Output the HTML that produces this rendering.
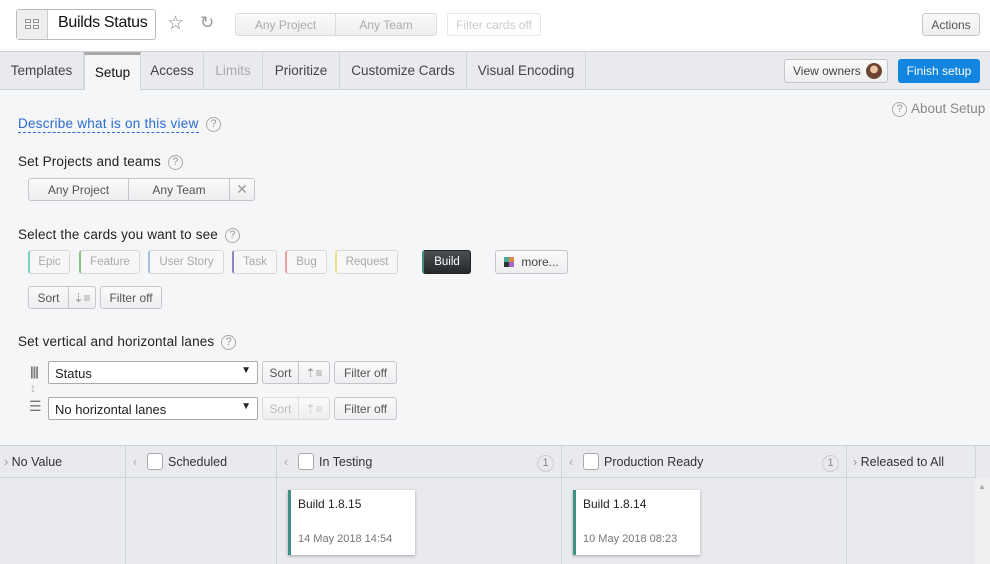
<!DOCTYPE html>
<html><head><meta charset="utf-8"><style>
*{box-sizing:border-box;margin:0;padding:0}
body{width:990px;height:564px;overflow:hidden;font-family:"Liberation Sans",sans-serif;background:#f5f6f8;position:relative;color:#222}
.a{position:absolute}
.btn{position:absolute;border:1px solid #c4c6ca;border-radius:3px;background:linear-gradient(#fafafa,#eceef0);font-size:12px;color:#555;display:flex;align-items:center;justify-content:center}
.q{display:inline-block;width:15px;height:15px;border:1px solid #aaa;border-radius:50%;font-size:11px;color:#999;text-align:center;line-height:13px;vertical-align:middle;margin-left:3px;letter-spacing:0}
.h{position:absolute;left:18px;font-size:13.5px;color:#222;letter-spacing:.15px}
.tab{position:absolute;top:52px;height:37px;font-size:13.5px;color:#444;display:flex;align-items:center;justify-content:center;border-right:1px solid #d2d5da}
.chip{position:absolute;top:250px;height:24px;border:1px solid #d6d8db;border-radius:3px;font-size:11.5px;color:#aaa;display:flex;align-items:center;justify-content:center;background:#f7f7f8;white-space:nowrap}
.col{position:absolute;top:446px;height:118px;border-right:1px solid #d0d3d8}
.ch{position:absolute;top:455px;font-size:12.5px;color:#333}
.cb{position:absolute;top:453px;width:16px;height:17px;border:1px solid #aaa;border-radius:3px;background:#fff}
.card{position:absolute;top:490px;width:127px;height:65px;background:#fff;border-left:3px solid #3f8f86;box-shadow:0 1px 3px rgba(0,0,0,.3);font-size:12px}
.cnt{position:absolute;top:455px;width:17px;height:17px;border:1px solid #ccc;border-radius:50%;font-size:11px;color:#888;text-align:center;line-height:15px}
.sq{position:absolute;width:6px;height:4px;border:1px solid #999}
</style></head><body>
<div class="a" style="left:0;top:0;width:990px;height:52px;background:#fff;border-bottom:1px solid #cfd2d6"></div>
<div class="a" style="left:16px;top:9px;width:140px;height:31px;border:1px solid #bbb;border-radius:3px;background:#fff"></div>
<div class="a" style="left:17px;top:10px;width:31px;height:29px;background:#eceef0;border-right:1px solid #ccc"></div>
<div class="sq" style="left:25px;top:19px"></div><div class="sq" style="left:33px;top:19px"></div>
<div class="sq" style="left:25px;top:25px"></div><div class="sq" style="left:33px;top:25px"></div>
<div class="a" style="left:58px;top:14px;font-size:16px;color:#111;letter-spacing:-.3px">Builds Status</div>
<div class="a" style="left:167px;top:12px;font-size:19px;color:#888">☆</div>
<div class="a" style="left:200px;top:13px;font-size:17px;color:#999">↻</div>
<div class="btn" style="left:235px;top:13px;width:101px;height:23px;color:#aaa;border-radius:3px 0 0 3px;border-color:#ddd">Any Project</div>
<div class="btn" style="left:335px;top:13px;width:102px;height:23px;color:#aaa;border-radius:0 3px 3px 0;border-color:#ddd">Any Team</div>
<div class="btn" style="left:447px;top:13px;width:94px;height:23px;color:#ccc;border-color:#e6e6e6;background:#fff">Filter cards off</div>
<div class="btn" style="left:922px;top:13px;width:58px;height:23px;color:#555">Actions</div>

<div class="a" style="left:0;top:52px;width:990px;height:38px;background:#e8eaee;border-bottom:1px solid #cfd2d6"></div>
<div class="tab" style="left:0;width:84px">Templates</div>
<div class="tab" style="left:84px;width:57px;background:#f5f6f8;color:#111;border-top:3px solid #a8a8a8;height:38px;border-left:1px solid #d2d5da">Setup</div>
<div class="tab" style="left:141px;width:63px">Access</div>
<div class="tab" style="left:204px;width:59px;color:#aaa">Limits</div>
<div class="tab" style="left:263px;width:77px">Prioritize</div>
<div class="tab" style="left:340px;width:127px">Customize Cards</div>
<div class="tab" style="left:467px;width:119px">Visual Encoding</div>
<div class="btn" style="left:784px;top:59px;width:104px;height:24px;justify-content:flex-start;padding-left:8px;color:#444;font-size:12px">View owners<span style="position:absolute;right:5px;top:3px;width:16px;height:16px;border-radius:50%;background:radial-gradient(circle at 50% 40%,#e9c3a6 30%,#6b4530 32%);"></span></div>
<div class="a" style="left:898px;top:59px;width:82px;height:24px;background:#1285e0;border-radius:3px;color:#fff;font-size:12px;display:flex;align-items:center;justify-content:center">Finish setup</div>

<div class="a" style="left:892px;top:101px;font-size:13.5px;color:#888"><span class="q" style="margin:0 4px 0 0">?</span>About Setup</div>
<div class="a" style="left:18px;top:116px;font-size:13.5px;color:#2b6bcf;border-bottom:1px dashed #2b6bcf;line-height:16px;letter-spacing:.25px">Describe what is on this view</div>
<span class="q a" style="left:203px;top:117px">?</span>
<div class="h" style="top:154px">Set Projects and teams <span class="q">?</span></div>
<div class="btn" style="left:28px;top:178px;width:101px;height:23px;border-radius:3px 0 0 3px">Any Project</div>
<div class="btn" style="left:128px;top:178px;width:102px;height:23px;border-radius:0">Any Team</div>
<div class="btn" style="left:229px;top:178px;width:26px;height:23px;border-radius:0 3px 3px 0;color:#999;font-size:14px">✕</div>
<div class="h" style="top:227px">Select the cards you want to see <span class="q">?</span></div>
<div class="chip" style="left:28px;width:42px;border-left:2px solid #7ecfc0">Epic</div>
<div class="chip" style="left:79px;width:61px;border-left:2px solid #8bc27f">Feature</div>
<div class="chip" style="left:148px;width:76px;border-left:2px solid #9fbfe3">User Story</div>
<div class="chip" style="left:232px;width:45px;border-left:2px solid #8c86bf">Task</div>
<div class="chip" style="left:285px;width:42px;border-left:2px solid #eba2a2">Bug</div>
<div class="chip" style="left:335px;width:63px;border-left:2px solid #ede08a">Request</div>
<div class="chip" style="left:422px;width:49px;background:linear-gradient(#4a4f52,#25292b);color:#fff;border-color:#222;border-left:2px solid #3f8f86">Build</div>
<div class="btn" style="left:495px;top:250px;width:73px;height:24px;color:#444"><span style="display:inline-block;width:10px;height:10px;margin-right:7px;background:conic-gradient(#d84 0 25%,#a6c 0 50%,#333 0 75%,#4a9 0)"></span>more...</div>
<div class="btn" style="left:28px;top:286px;width:41px;height:23px;border-radius:3px 0 0 3px">Sort</div>
<div class="btn" style="left:68px;top:286px;width:28px;height:23px;border-radius:0 3px 3px 0;color:#999">⇣≡</div>
<div class="btn" style="left:100px;top:286px;width:62px;height:23px">Filter off</div>
<div class="h" style="top:334px">Set vertical and horizontal lanes <span class="q">?</span></div>
<div class="a" style="left:30px;top:364px;font-size:13px;color:#777;font-weight:bold;letter-spacing:-1px">|||</div>
<div class="a" style="left:30px;top:381px;font-size:12px;color:#aaa">↕</div>
<div class="a" style="left:29px;top:398px;font-size:14px;color:#777">☰</div>
<div class="a" style="left:48px;top:361px;width:210px;height:23px;border:1px solid #aaa;border-radius:2px;background:#fff;font-size:13px;padding:4px 6px">Status<span style="position:absolute;right:6px;top:3px;font-size:10px">▼</span></div>
<div class="a" style="left:48px;top:397px;width:210px;height:23px;border:1px solid #aaa;border-radius:2px;background:#fff;font-size:13px;padding:4px 6px">No horizontal lanes<span style="position:absolute;right:6px;top:3px;font-size:10px">▼</span></div>
<div class="btn" style="left:262px;top:361px;width:37px;height:23px;border-radius:3px 0 0 3px">Sort</div>
<div class="btn" style="left:298px;top:361px;width:32px;height:23px;border-radius:0 3px 3px 0;color:#999">⇡≡</div>
<div class="btn" style="left:334px;top:361px;width:63px;height:23px">Filter off</div>
<div class="btn" style="left:262px;top:397px;width:37px;height:23px;border-radius:3px 0 0 3px;color:#bbb;border-color:#ddd">Sort</div>
<div class="btn" style="left:298px;top:397px;width:32px;height:23px;border-radius:0 3px 3px 0;color:#ccc;border-color:#ddd">⇡≡</div>
<div class="btn" style="left:334px;top:397px;width:63px;height:23px">Filter off</div>

<div class="a" style="left:0;top:445px;width:990px;height:119px;background:#e8eaee;border-top:1px solid #cfd2d6"></div>
<div class="a" style="left:0;top:477px;width:975px;height:1px;background:#cfd2d6"></div>
<div class="col" style="left:0;width:126px"></div>
<div class="col" style="left:126px;width:151px"></div>
<div class="col" style="left:277px;width:285px"></div>
<div class="col" style="left:562px;width:285px"></div>
<div class="col" style="left:847px;width:129px"></div>
<div class="a" style="left:975px;top:478px;width:15px;height:86px;background:#f0f0f0"></div>
<div class="a" style="left:978px;top:482px;font-size:8px;color:#aaa">▲</div>
<div class="ch" style="left:4px;color:#999">›&nbsp;<span style="color:#333">No Value</span></div>
<div class="ch" style="left:133px;color:#aaa">‹</div><div class="cb" style="left:147px"></div><div class="ch" style="left:168px">Scheduled</div>
<div class="ch" style="left:284px;color:#aaa">‹</div><div class="cb" style="left:298px"></div><div class="ch" style="left:319px">In Testing</div><div class="cnt" style="left:537px">1</div>
<div class="ch" style="left:569px;color:#aaa">‹</div><div class="cb" style="left:583px"></div><div class="ch" style="left:604px">Production Ready</div><div class="cnt" style="left:822px">1</div>
<div class="ch" style="left:853px;color:#999">›&nbsp;<span style="color:#333">Released to All</span></div>
<div class="card" style="left:288px"><div style="position:absolute;left:7px;top:7px;font-size:12px;color:#222">Build 1.8.15</div><div style="position:absolute;left:7px;top:43px;font-size:11px;color:#777">14 May 2018 14:54</div></div>
<div class="card" style="left:573px"><div style="position:absolute;left:7px;top:7px;font-size:12px;color:#222">Build 1.8.14</div><div style="position:absolute;left:7px;top:43px;font-size:11px;color:#777">10 May 2018 08:23</div></div>
</body></html>
